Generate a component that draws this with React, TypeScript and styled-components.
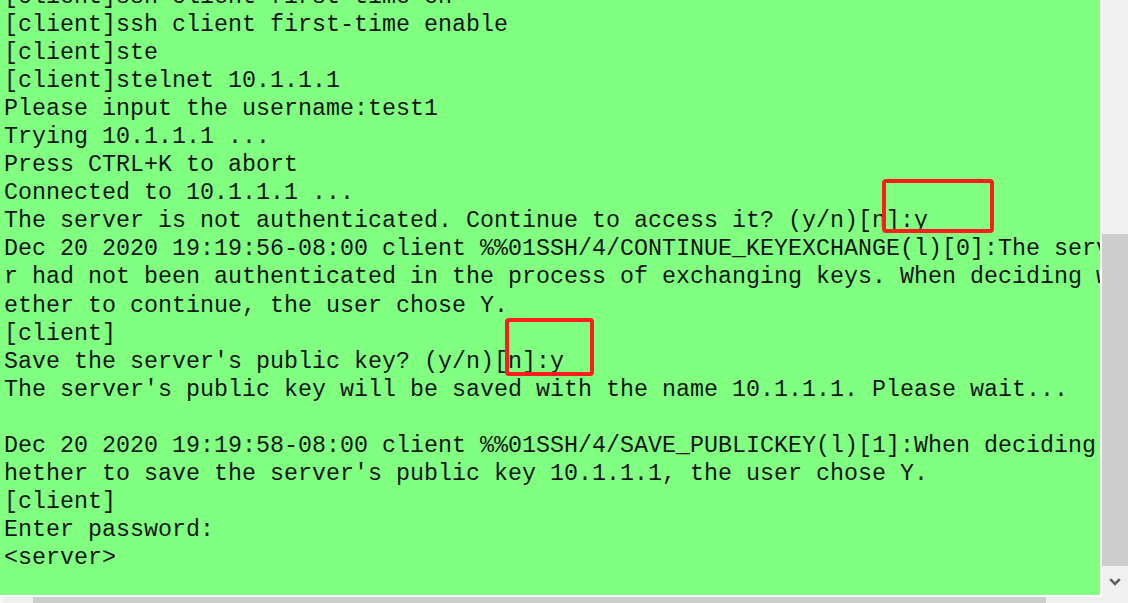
import React from "react";
import styled, { createGlobalStyle } from "styled-components";

const Global = createGlobalStyle`
  html, body { margin: 0; padding: 0; background: #f0f0f0; overflow: hidden; }
  #root { width: 1128px; height: 603px; }
`;

const Window = styled.div`
  width: 1128px;
  height: 603px;
  display: grid;
  grid-template-columns: 1102px 26px;
  grid-template-rows: 597px 6px;
  background: #f0f0f0;
  overflow: hidden;
`;

const Terminal = styled.div`
  position: relative;
  overflow: hidden;
  background: #80ff80;
  border-right: 2px solid #ffffff;
  border-bottom: 2px solid #ffffff;
  box-sizing: border-box;
`;

const Output = styled.pre`
  margin: -17.5px 0 0 0;
  padding: 0 0 0 4px;
  font-family: "Courier New", "Nimbus Mono PS", "FreeMono", "Liberation Mono", monospace;
  font-size: 23.33px;
  line-height: 28.1px;
  color: #161616;
  white-space: pre;
`;

const Highlight = styled.div<{ $x: number; $y: number; $w: number; $h: number }>`
  position: absolute;
  left: ${(p) => p.$x}px;
  top: ${(p) => p.$y}px;
  width: ${(p) => p.$w}px;
  height: ${(p) => p.$h}px;
  box-sizing: border-box;
  border: 4px solid #ff1c1c;
  border-radius: 4px;
`;

const VScroll = styled.div`
  grid-column: 2;
  grid-row: 1 / 3;
  display: flex;
  flex-direction: column;
  background: #f0f0f0;
`;

const VThumb = styled.div`
  margin-top: 234px;
  height: 332px;
  background: #cdcdcd;
`;

const ArrowButton = styled.div`
  height: 31px;
  display: flex;
  align-items: center;
  justify-content: center;
`;

const HScroll = styled.div`
  grid-column: 1;
  grid-row: 2;
  display: flex;
  background: #f0f0f0;
  padding-left: 30px;
  border-left: 3px solid #f8f8f8;
  box-sizing: border-box;
`;

const HThumb = styled.div`
  width: 1013px;
  height: 6px;
  background: #cdcdcd;
`;

const lines = [
  "[client]ssh client first-time en",
  "[client]ssh client first-time enable",
  "[client]ste",
  "[client]stelnet 10.1.1.1",
  "Please input the username:test1",
  "Trying 10.1.1.1 ...",
  "Press CTRL+K to abort",
  "Connected to 10.1.1.1 ...",
  "The server is not authenticated. Continue to access it? (y/n)[n]:y",
  "Dec 20 2020 19:19:56-08:00 client %%01SSH/4/CONTINUE_KEYEXCHANGE(l)[0]:The serve",
  "r had not been authenticated in the process of exchanging keys. When deciding wh",
  "ether to continue, the user chose Y.",
  "[client]",
  "Save the server's public key? (y/n)[n]:y",
  "The server's public key will be saved with the name 10.1.1.1. Please wait...",
  "",
  "Dec 20 2020 19:19:58-08:00 client %%01SSH/4/SAVE_PUBLICKEY(l)[1]:When deciding w",
  "hether to save the server's public key 10.1.1.1, the user chose Y.",
  "[client]",
  "Enter password:",
  "<server>",
];

export default function App() {
  return (
    <>
      <Global />
      <Window>
        <Terminal>
          <Output>{lines.join("\n")}</Output>
          <Highlight $x={882} $y={179} $w={112} $h={54} />
          <Highlight $x={505} $y={318} $w={89} $h={58} />
        </Terminal>
        <VScroll>
          <VThumb />
          <ArrowButton>
            <svg width="12" height="8" viewBox="0 0 12 8">
              <path d="M1.2 1.2 L6 6 L10.8 1.2" fill="none" stroke="#606060" strokeWidth="2.6" />
            </svg>
          </ArrowButton>
        </VScroll>
        <HScroll>
          <HThumb />
        </HScroll>
      </Window>
    </>
  );
}
